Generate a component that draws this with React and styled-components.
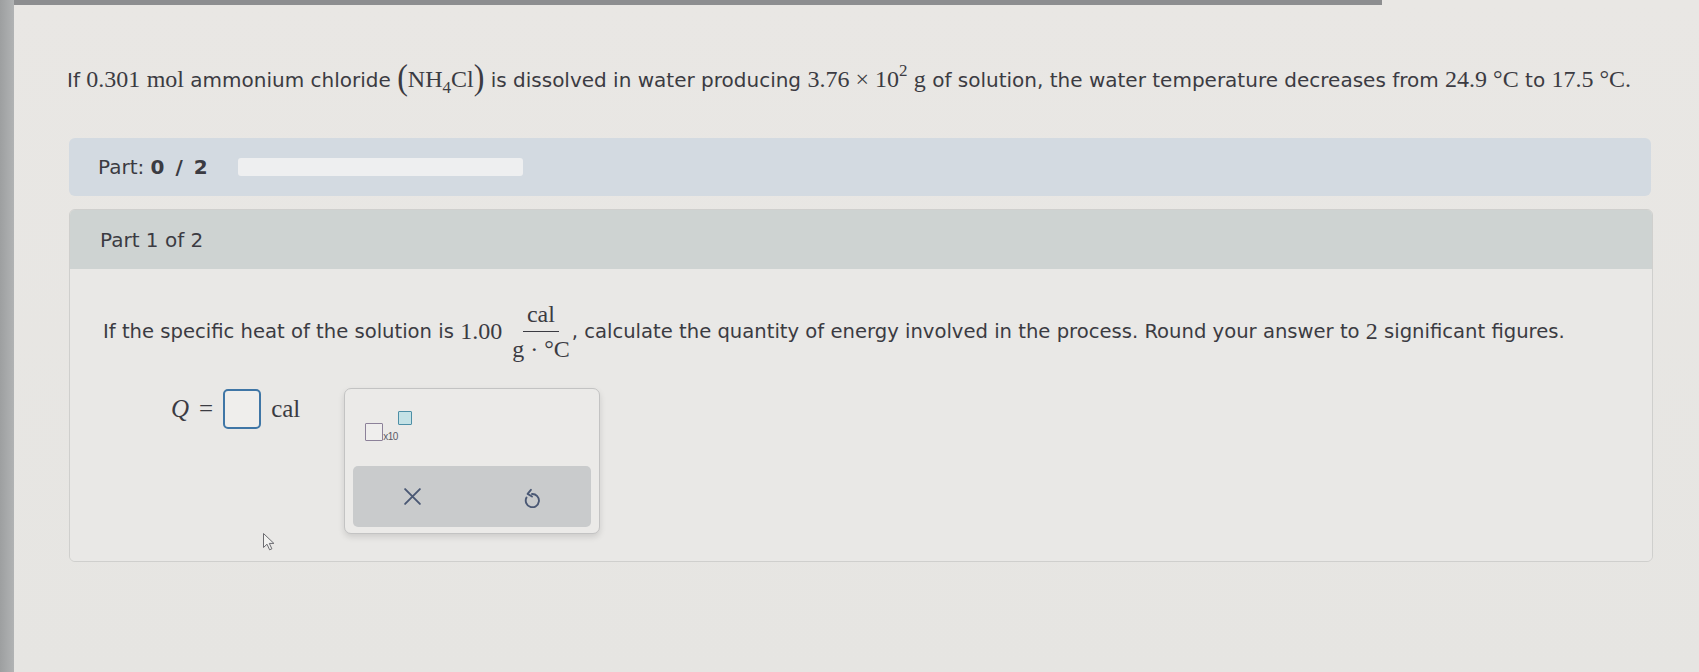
import styled, { createGlobalStyle } from 'styled-components';

const GlobalStyle = createGlobalStyle`
  html, body {
    margin: 0;
    padding: 0;
    background: #e8e6e3;
  }
  body {
    font-family: "DejaVu Sans", Verdana, sans-serif;
    color: #3b3b42;
  }
`;

const Page = styled.div`
  display: flex;
  width: 1699px;
  height: 672px;
  overflow: hidden;
  background: linear-gradient(180deg, #e9e7e4 0%, #e6e5e2 100%);
`;

const ScreenEdge = styled.div`
  width: 14px;
  flex: none;
  background: linear-gradient(90deg, #9d9fa0, #b1b3b4);
`;

const Main = styled.main`
  flex: 1;
  display: flex;
  flex-direction: column;
`;

const TopBar = styled.div`
  width: 1368px;
  height: 5px;
  background: #8d8e90;
`;

const Content = styled.div`
  display: flex;
  flex-direction: column;
  padding: 0 0 0 55px;
`;

const Statement = styled.p`
  margin: 50px 0 0 -2px;
  font-size: 20px;
  line-height: 32px;
  white-space: nowrap;
`;

const M = styled.span`
  font-family: "Liberation Serif", "Times New Roman", serif;
  font-size: ${(p) => p.$size || 24}px;
  font-style: ${(p) => (p.$italic ? 'italic' : 'normal')};
`;

const Paren = styled.span`
  font-family: "Liberation Serif", serif;
  font-size: 32px;
  display: inline-block;
  transform: scaleY(1.15);
  font-weight: 300;
`;

const Sub = styled.sub`
  font-size: 17px;
  vertical-align: -6px;
`;

const Sup = styled.sup`
  font-size: 17px;
  vertical-align: 11px;
`;

const PartBar = styled.div`
  margin-top: 34px;
  width: 1582px;
  height: 58px;
  box-sizing: border-box;
  padding-left: 29px;
  display: flex;
  align-items: center;
  gap: 30px;
  background: #d3dae1;
  border-radius: 6px;
  font-size: 20px;

  b {
    font-weight: bold;
    word-spacing: 4px;
  }
`;

const Progress = styled.div`
  width: 285px;
  height: 18px;
  border-radius: 3px;
  background: #eeeff0;
`;

const Section = styled.section`
  margin-top: 13px;
  width: 1582px;
  border: 1px solid #cfcfcd;
  border-radius: 6px;
  overflow: hidden;
`;

const SectionHead = styled.div`
  height: 59px;
  box-sizing: border-box;
  padding-left: 30px;
  display: flex;
  align-items: center;
  background: #ced3d2;
  font-size: 20px;
`;

const SectionBody = styled.div`
  position: relative;
  height: 292px;
  box-sizing: border-box;
  padding: 31px 0 0 33px;
  background: #e9e8e6;
`;

const Question = styled.div`
  display: flex;
  align-items: center;
  font-size: 19.6px;
  white-space: pre;
`;

const Frac = styled.span`
  display: inline-flex;
  flex-direction: column;
  align-items: center;
  margin: 0 2px 0 10px;
  font-family: "Liberation Serif", serif;
  font-size: 24px;
  line-height: 28px;
`;

const Num = styled.span`
  padding: 0 4px 3px;
  border-bottom: 1.5px solid #3b3b42;
`;

const Den = styled.span`
  padding-top: 3px;
`;

const AnswerRow = styled.div`
  margin-top: 25px;
  display: flex;
  align-items: flex-start;
  gap: 44px;
`;

const Equation = styled.div`
  margin-left: 68px;
  display: flex;
  align-items: center;
  gap: 10px;
  height: 42px;
  font-family: "Liberation Serif", serif;
  font-size: 25px;
`;

const AnswerBox = styled.div`
  width: 34px;
  height: 36px;
  border: 2px solid #3f76a6;
  border-radius: 5px;
  background: #efeeec;
`;

const Palette = styled.div`
  width: 256px;
  height: 146px;
  box-sizing: border-box;
  border: 1.5px solid #c3c3c3;
  border-radius: 7px;
  background: #ebeae8;
  box-shadow: 0 3px 6px rgba(0, 0, 0, 0.12);
  padding: 22px 8px 6px;
  display: flex;
  flex-direction: column;
  justify-content: space-between;
`;

const SciButton = styled.div`
  margin-left: 12px;
  display: flex;
  align-items: flex-end;
  height: 30px;
`;

const Slot = styled.div`
  width: ${(p) => p.$size}px;
  height: ${(p) => p.$size}px;
  border: 1.5px solid ${(p) => p.$color};
  background: ${(p) => p.$fill};
  border-radius: 1px;
  align-self: ${(p) => (p.$top ? 'flex-start' : 'flex-end')};
`;

const Times = styled.span`
  font-family: "Liberation Sans", Arial, sans-serif;
  font-size: 10px;
  letter-spacing: -0.5px;
  color: #5a5a66;
  margin-bottom: -1px;
`;

const ActionBar = styled.div`
  display: flex;
  height: 61px;
  border-radius: 5px;
  background: #c9cbcc;
`;

const Action = styled.button`
  flex: 1;
  border: 0;
  background: transparent;
  display: flex;
  align-items: center;
  justify-content: center;
  padding: 0;
  color: #4a5874;
`;

const Cursor = styled.svg`
  position: absolute;
  left: 192px;
  top: 263px;
`;

export default function App() {
  return (
    <>
      <GlobalStyle />
      <Page>
        <ScreenEdge />
        <Main>
          <TopBar />
          <Content>
            <Statement>
              If <M>0.301</M> <M>mol</M> ammonium chloride{' '}
              <Paren>(</Paren>
              <M>
                NH<Sub>4</Sub>Cl
              </M>
              <Paren>)</Paren> is dissolved in water producing{' '}
              <M>
                3.76 × 10<Sup>2</Sup>
              </M>{' '}
              <M>g</M> of solution, the water temperature decreases from <M>24.9 °C</M> to{' '}
              <M>17.5 °C.</M>
            </Statement>

            <PartBar>
              <span>
                Part: <b>0 / 2</b>
              </span>
              <Progress />
            </PartBar>

            <Section>
              <SectionHead>Part 1 of 2</SectionHead>
              <SectionBody>
                <Question>
                  If the specific heat of the solution is <M>1.00</M>
                  <Frac>
                    <Num>cal</Num>
                    <Den>g · °C</Den>
                  </Frac>
                  , calculate the quantity of energy involved in the process. Round your answer to{' '}
                  <M>2</M> significant figures.
                </Question>

                <AnswerRow>
                  <Equation>
                    <M $italic $size={25}>Q</M>
                    <span>=</span>
                    <AnswerBox />
                    <span>cal</span>
                  </Equation>

                  <Palette>
                    <SciButton>
                      <Slot $size={16} $color="#8c8199" $fill="#efeeed" />
                      <Times>x10</Times>
                      <Slot $size={12} $color="#4d8fa6" $fill="#c4e2e6" $top />
                    </SciButton>
                    <ActionBar>
                      <Action aria-label="clear">
                        <svg width="19" height="19" viewBox="0 0 18 18" fill="none" stroke="currentColor" strokeWidth="1.8" strokeLinecap="round">
                          <path d="M2 2l14 14M16 2L2 16" />
                        </svg>
                      </Action>
                      <Action aria-label="undo">
                        <svg width="20" height="22" viewBox="0 0 18 20" fill="none" stroke="currentColor" strokeWidth="1.7" strokeLinecap="round" strokeLinejoin="round">
                          <path d="M4 10.5a6 6 0 1 0 5-3.2" />
                          <path d="M8 3.5L5 7.2l4 2.3" />
                        </svg>
                      </Action>
                    </ActionBar>
                  </Palette>
                </AnswerRow>

                <Cursor width="14" height="20" viewBox="0 0 14 20">
                  <path d="M1.5 1.5v14l3.5-3.3 2.6 5.6 2.3-1-2.6-5.4h4.6z" fill="#f2f2f0" stroke="#6b6b70" strokeWidth="1" strokeLinejoin="round" />
                </Cursor>
              </SectionBody>
            </Section>
          </Content>
        </Main>
      </Page>
    </>
  );
}
